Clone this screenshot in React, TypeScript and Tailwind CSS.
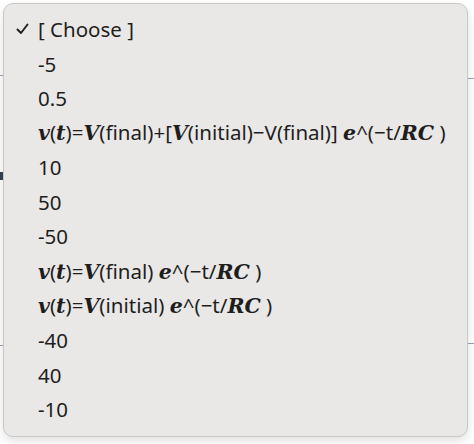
import { FC } from "react";

type Row = {
  key: string;
  label: JSX.Element | string;
  checked?: boolean;
};

const M: FC<{ children: string }> = (props) => (
  <span className="font-bold italic" style={{ fontFamily: '"DejaVu Serif", "Liberation Serif", serif' }}>
    {props.children}
  </span>
);

const rows: Row[] = [
  { key: "choose", label: "[ Choose ]", checked: true },
  { key: "m5", label: "-5" },
  { key: "05", label: "0.5" },
  {
    key: "f1",
    label: (
      <>
        <M>v</M>(<M>t</M>)=<M>V</M>(final)+[<M>V</M>(initial)−V(final)] <M>e</M>^(−t/<M>RC</M> )
      </>
    ),
  },
  { key: "10", label: "10" },
  { key: "50", label: "50" },
  { key: "m50", label: "-50" },
  {
    key: "f2",
    label: (
      <>
        <M>v</M>(<M>t</M>)=<M>V</M>(final) <M>e</M>^(−t/<M>RC</M> )
      </>
    ),
  },
  {
    key: "f3",
    label: (
      <>
        <M>v</M>(<M>t</M>)=<M>V</M>(initial) <M>e</M>^(−t/<M>RC</M> )
      </>
    ),
  },
  { key: "m40", label: "-40" },
  { key: "40", label: "40" },
  { key: "m10", label: "-10" },
];

export default function App() {
  return (
    <div className="relative w-[474px] h-[444px] bg-white overflow-hidden">
      {/* bits of the page behind the menu */}
      <div className="absolute left-0 top-[75px] w-[4px] h-px bg-gray-400" />
      <div className="absolute right-0 top-[78px] w-[6px] h-px bg-gray-400" />
      <div className="absolute left-0 top-[172px] w-[3px] h-[8px] bg-gray-700" />
      <div className="absolute left-0 top-[345px] w-[4px] h-px bg-gray-400" />
      <div className="absolute right-0 top-[343px] w-[6px] h-px bg-gray-400" />

      <div
        className="absolute left-[3px] top-[3px] w-[465px] h-[434px] rounded-[10px] bg-[#e9e8e6] border border-[#c9c8c6] shadow-[0_4px_10px_rgba(0,0,0,0.12)] pt-[8px] text-[#1e1e1e] text-[20.5px]"
        style={{ fontFamily: '"Noto Sans", "Open Sans", sans-serif' }}
      >
        {rows.map((r) => (
          <div key={r.key} className="flex items-center h-[34.6px] whitespace-nowrap">
            <div className="w-[34px] flex justify-end pr-[9px]">
              {r.checked && (
                <svg width="13" height="12" viewBox="0 0 13 12">
                  <path d="M1.5 6.5 L5 10 L11.5 1.5" fill="none" stroke="#1e1e1e" strokeWidth="1.9" strokeLinecap="round" strokeLinejoin="round" />
                </svg>
              )}
            </div>
            <div>{r.label}</div>
          </div>
        ))}
      </div>
    </div>
  );
}
